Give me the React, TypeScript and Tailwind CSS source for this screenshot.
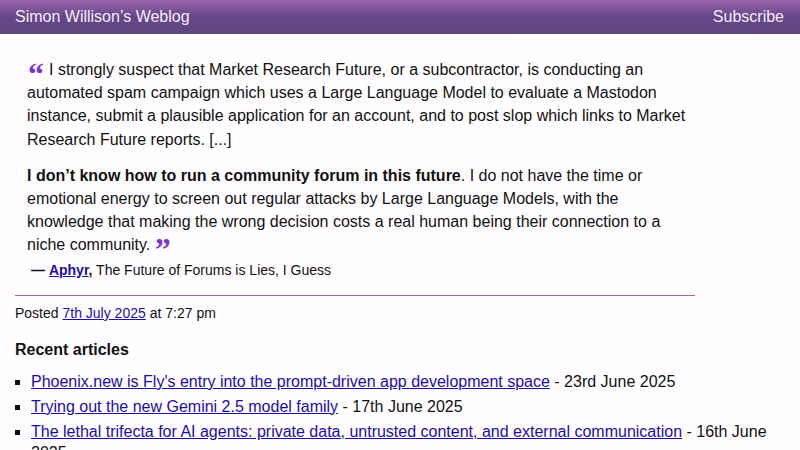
export default function App() {
  return (
    <div className="min-h-screen bg-[#fffdff] font-['Liberation_Sans',Arial,sans-serif] text-[#111]">
      <header className="flex h-[34px] items-center justify-between bg-gradient-to-b from-[#9a62a9] via-[#654789] to-[#60467f] px-[15px] text-[16px] text-[#f3ecfa]">
        <span>Simon Willison’s Weblog</span>
        <span className="pr-px">Subscribe</span>
      </header>

      <main className="w-[695px] pl-[15px] pt-[24px]">
        <blockquote className="ml-[12px] text-[16px] leading-[23.2px]">
          <p className="mb-[13px]">
            <span className="mr-[5px] ml-px align-[-10px] font-['Liberation_Serif',serif] text-[32px] font-bold leading-[0] text-[#7d34cf]">“</span>
            I strongly suspect that Market Research Future, or a subcontractor, is conducting an automated spam
            campaign which uses a Large Language Model to evaluate a Mastodon instance, submit a plausible application
            for an account, and to post slop which links to Market Research Future reports. [...]
          </p>
          <p>
            <strong>I don’t know how to run a community forum in this future</strong>. I do not have the time or
            emotional energy to screen out regular attacks by Large Language Models, with the knowledge that making the
            wrong decision costs a real human being their connection to a niche community.{" "}
            <span className="align-[-10px] font-['Liberation_Serif',serif] text-[32px] font-bold leading-[0] text-[#7d34cf]">”</span>
          </p>
        </blockquote>
        <p className="ml-[16px] mt-[3px] text-[14px] leading-[20px]">
          <strong>—</strong>{" "}
          <a href="#" className="font-bold text-[#1b0dab] underline">
            Aphyr
          </a>
          <strong>,</strong> The Future of Forums is Lies, I Guess
        </p>

        <div className="mt-[15px] h-px bg-[#9a6aa8]" />

        <p className="mt-[7px] text-[14px] leading-[20px]">
          Posted{" "}
          <a href="#" className="text-[#1b0dab] underline">
            7th July 2025
          </a>{" "}
          at 7:27 pm
        </p>

        <h2 className="mt-[17px] text-[16px] font-bold leading-[20px]">Recent articles</h2>
      </main>

      <ul className="mt-[11px] w-[790px] list-[square] pl-[31px] text-[16px] leading-[21px]">
        <li className="mb-[4px]">
          <a href="#" className="text-[#1b0dab] underline">
            Phoenix.new is Fly's entry into the prompt-driven app development space
          </a>{" "}
          - 23rd June 2025
        </li>
        <li className="mb-[4px]">
          <a href="#" className="text-[#1b0dab] underline">
            Trying out the new Gemini 2.5 model family
          </a>{" "}
          - 17th June 2025
        </li>
        <li className="mb-[4px]">
          <a href="#" className="text-[#1b0dab] underline">
            The lethal trifecta for AI agents: private data, untrusted content, and external communication
          </a>{" "}
          - 16th June 2025
        </li>
      </ul>
    </div>
  );
}
